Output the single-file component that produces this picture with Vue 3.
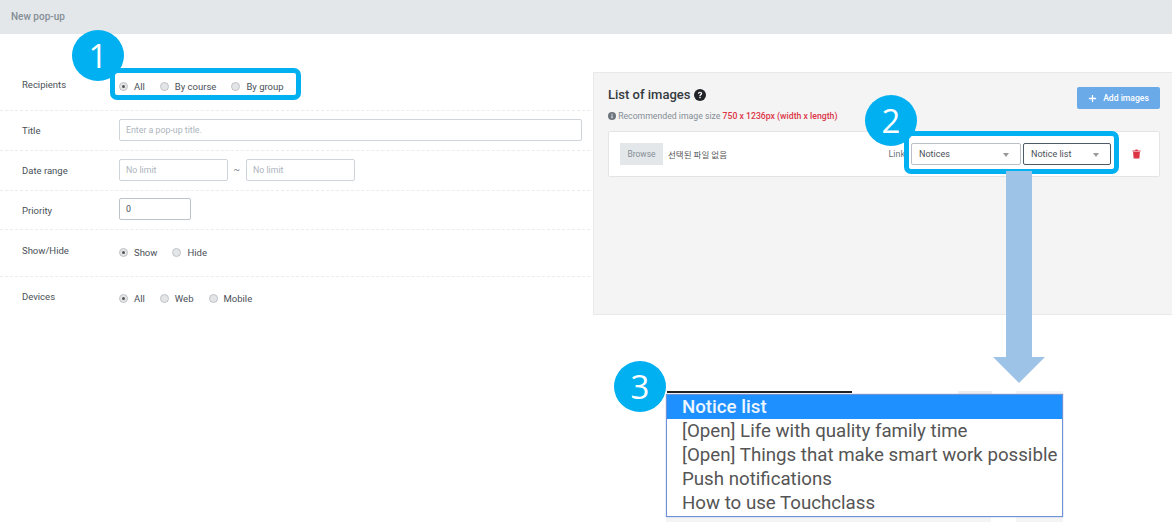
<script setup>
const recipients = [
  { label: 'All', checked: true },
  { label: 'By course' },
  { label: 'By group' },
]
const visibility = [{ label: 'Show', checked: true }, { label: 'Hide' }]
const devices = [{ label: 'All', checked: true }, { label: 'Web' }, { label: 'Mobile' }]
const options = [
  '[Open] Life with quality family time',
  '[Open] Things that make smart work possible',
  'Push notifications',
  'How to use Touchclass',
]
</script>

<template>
  <div class="page">
    <header class="header">New pop-up</header>
    <main class="body">
      <section class="form">
        <div class="row row-recipients">
          <span class="label label-up">Recipients</span>
          <div class="radios">
            <label v-for="r in recipients" :key="r.label" class="radio">
              <i :class="['dot', { on: r.checked }]"></i>{{ r.label }}
            </label>
          </div>
        </div>
        <div class="row row-field">
          <span class="label label-down">Title</span>
          <div class="input wide">Enter a pop-up title.</div>
        </div>
        <div class="row row-field">
          <span class="label label-down">Date range</span>
          <div class="dates">
            <div class="input date">No limit</div>
            <span class="tilde">~</span>
            <div class="input date">No limit</div>
          </div>
        </div>
        <div class="row row-field">
          <span class="label label-down">Priority</span>
          <div class="input small">0</div>
        </div>
        <div class="row row-show">
          <span class="label label-up">Show/Hide</span>
          <div class="radios">
            <label v-for="r in visibility" :key="r.label" class="radio">
              <i :class="['dot', { on: r.checked }]"></i>{{ r.label }}
            </label>
          </div>
        </div>
        <div class="row row-devices">
          <span class="label label-up">Devices</span>
          <div class="radios">
            <label v-for="r in devices" :key="r.label" class="radio">
              <i :class="['dot', { on: r.checked }]"></i>{{ r.label }}
            </label>
          </div>
        </div>
      </section>

      <section class="panel">
        <div class="panel-top">
          <div>
            <h2 class="panel-title">
              List of images
              <svg class="help" viewBox="0 0 16 16" width="12" height="12">
                <circle cx="8" cy="8" r="8" fill="#212529" />
                <path d="M5.2 6.2c0-1.7 1.3-2.7 2.9-2.7s2.8 1 2.8 2.4c0 2-2.1 2-2.1 3.3H7.1c0-2.1 2-2.2 2-3.2 0-.5-.4-.9-1-.9-.7 0-1.1.4-1.2 1.1z" fill="#fff" />
                <rect x="7.1" y="10.3" width="1.8" height="1.9" fill="#fff" />
              </svg>
            </h2>
            <p class="hint">
              <svg viewBox="0 0 16 16" width="8" height="8">
                <circle cx="8" cy="8" r="8" fill="#6c757d" />
                <rect x="7" y="7" width="2" height="5.5" fill="#fff" />
                <rect x="7" y="3.6" width="2" height="2" fill="#fff" />
              </svg>
              Recommended image size <b>750 x 1236px (width x length)</b>
            </p>
          </div>
          <button class="add">
            <svg viewBox="0 0 10 10" width="9" height="9"><path d="M5 1v8M1 5h8" stroke="#fff" stroke-width="1.4" /></svg>
            Add images
          </button>
        </div>
        <div class="image-row">
          <span class="browse">Browse</span>
          <span class="file">선택된 파일 없음</span>
          <span class="link">Link</span>
          <div class="select s1">Notices<i class="caret"></i></div>
          <div class="select s2">Notice list<i class="caret"></i></div>
          <svg class="trash" viewBox="0 0 10 11" width="9" height="10">
            <path d="M0.5 1.6h3L4 .6h2l.5 1h3v1.2h-9zM1.2 3.4h7.6L8.2 10.6H1.8z" fill="#dc3545" />
          </svg>
        </div>
      </section>
    </main>

    <div class="box box1"></div>
    <div class="box box2"></div>
    <div class="badge b1">1</div>
    <div class="badge b2">2</div>
    <div class="badge b3">3</div>

    <div class="shaft"></div>
    <div class="head"></div>

    <div class="strip-top"></div>
    <div class="strip-bottom"></div>
    <div class="blackline"></div>
    <ul class="dropdown">
      <li class="active">Notice list</li>
      <li v-for="o in options" :key="o">{{ o }}</li>
    </ul>
  </div>
</template>

<style scoped>
.page {
  position: relative;
  width: 1172px;
  height: 522px;
  overflow: hidden;
  background: #fff;
  font-family: Roboto, "Noto Sans CJK KR", sans-serif;
  color: #495057;
  font-size: 9.5px;
}
.header {
  height: 34px;
  line-height: 34px;
  padding-left: 11px;
  background: #e3e7ea;
  color: #868e96;
  font-size: 10px;
  font-weight: 500;
}
.body {
  display: flex;
  gap: 3px;
}
.form {
  width: 590px;
  flex: none;
}
.row {
  display: flex;
  align-items: center;
  padding-left: 22px;
  border-bottom: 1px dashed #ececec;
  box-sizing: border-box;
}
.row:last-child { border-bottom: 0; }
.label {
  width: 97px;
  flex: none;
}
.label-up { position: relative; top: -2px; }
.label-down { position: relative; top: 1px; }
.row-recipients { height: 77px; padding-top: 28px; }
.row-field { height: 40px; padding-bottom: 2px; }
.row:nth-child(4) { height: 39px; }
.row-show { height: 47px; padding-bottom: 2px; }
.row-devices { height: 44px; padding-bottom: 2px; }
.radios { display: flex; gap: 15px; }
.radio {
  display: flex;
  align-items: center;
  gap: 6px;
  height: 14px;
}
.dot {
  width: 9px;
  height: 9px;
  box-sizing: border-box;
  border-radius: 50%;
  border: 1px solid #bfc3c7;
  background: #e3e5e7;
  position: relative;
}
.dot.on::after {
  content: "";
  position: absolute;
  inset: 2px;
  border-radius: 50%;
  background: #555;
}
.input {
  box-sizing: border-box;
  height: 22px;
  line-height: 20px;
  padding-left: 6px;
  border: 1px solid #ced4da;
  border-radius: 2px;
  background: #fff;
  color: #adb5bd;
  font-size: 8.8px;
}
.wide { width: 463px; }
.date { width: 108.5px; }
.small { width: 72px; color: #495057; border-color: #bcc3c9; }
.dates { display: flex; align-items: center; }
.tilde { width: 18.5px; text-align: center; color: #6c757d; }
.panel {
  box-sizing: border-box;
  margin-top: 38px;
  width: 579px;
  height: 243px;
  background: #f4f4f4;
  border: 1px solid #e9e9e9;
  border-right: 0;
  padding: 14px 12px 0 14px;
}
.panel-top {
  display: flex;
  justify-content: space-between;
  align-items: flex-start;
}
.panel-title {
  margin: 0;
  font-size: 13px;
  line-height: 16px;
  font-weight: 500;
  color: #343a40;
  display: flex;
  align-items: center;
  gap: 4px;
}
.hint {
  margin: 8px 0 0;
  font-size: 8.7px;
  line-height: 11px;
  color: #868e96;
  white-space: nowrap;
}
.hint svg { vertical-align: -1px; }
.hint b { color: #dc3545; font-weight: 500; }
.add {
  box-sizing: border-box;
  width: 83px;
  height: 22px;
  margin-top: 0;
  border: 0;
  border-radius: 2px;
  background: #6aaae8;
  color: #fff;
  font: 500 8.6px Roboto, sans-serif;
  display: flex;
  align-items: center;
  justify-content: center;
  gap: 6px;
}
.image-row {
  box-sizing: border-box;
  margin-top: 9px;
  height: 46px;
  display: flex;
  align-items: center;
  padding-left: 11px;
  background: #fff;
  border: 1px solid #e4e4e4;
  border-radius: 2px;
}
.browse {
  width: 43px;
  height: 22px;
  line-height: 22px;
  text-align: center;
  background: #e3e7ea;
  color: #868e96;
  font-size: 8.5px;
}
.file { margin-left: 5px; font-size: 8.5px; color: #555; }
.link { margin-left: auto; font-size: 9px; color: #6c757d; }
.select {
  box-sizing: border-box;
  height: 22px;
  line-height: 20px;
  padding-left: 7px;
  border: 1px solid #ced4da;
  border-radius: 2px;
  background: #fff;
  color: #495057;
  font-size: 9px;
  position: relative;
}
.s1 { width: 110px; margin-left: 6px; border-color: #b9c0c7; }
.s2 { width: 88px; margin-left: 2px; border-color: #4d5a68; }
.caret {
  position: absolute;
  right: 11px;
  top: 8.5px;
  border: 3px solid transparent;
  border-top: 4px solid #999;
  border-bottom: 0;
}
.trash { margin-left: 21px; margin-right: 18px; }
.box {
  position: absolute;
  box-sizing: border-box;
  border: 5px solid #00b0f0;
  border-radius: 7px;
}
.box1 { left: 110px; top: 68px; width: 191px; height: 32px; }
.box2 { left: 904px; top: 131px; width: 215px; height: 43px; }
.badge {
  position: absolute;
  width: 52px;
  height: 51px;
  border-radius: 50%;
  background: #00b0f0;
  color: #fff;
  text-align: center;
  font: 33px/51px "Open Sans", sans-serif;
}
.b1 { left: 72px; top: 30px; }
.b2 { left: 865px; top: 95px; }
.b3 { left: 614px; top: 361px; }
.shaft {
  position: absolute;
  left: 1006px;
  top: 171px;
  width: 26px;
  height: 186px;
  background: #9dc3e6;
}
.head {
  position: absolute;
  left: 993px;
  top: 357px;
  width: 0;
  height: 0;
  border-left: 26px solid transparent;
  border-right: 26px solid transparent;
  border-top: 26px solid #9dc3e6;
}
.strip-top {
  position: absolute;
  left: 852px;
  top: 391px;
  width: 211px;
  height: 3px;
  background: linear-gradient(to right, #fff 106px, #eeeeee 106px, #eeeeee 140px, #fff 140px, #fff 164px, #f4f4f4 164px);
}
.strip-bottom {
  position: absolute;
  left: 666px;
  top: 517px;
  width: 397px;
  height: 5px;
  background: linear-gradient(to right, #f4f4f4 325px, #fff 325px, #fff 350px, #f4f4f4 350px);
}
.blackline {
  position: absolute;
  left: 667px;
  top: 391px;
  width: 185px;
  height: 2px;
  background: #222;
}
.dropdown {
  position: absolute;
  left: 666px;
  top: 394px;
  box-sizing: border-box;
  width: 397px;
  height: 123px;
  margin: 0;
  padding: 0;
  list-style: none;
  background: #fff;
  border: 1px solid #6f93d6;
  box-shadow: 0 0 1px #6f93d6;
  font-size: 18.7px;
  color: #555;
  white-space: nowrap;
}
.dropdown li {
  height: 24px;
  line-height: 24px;
  padding-left: 15px;
}
.dropdown .active {
  background: #1e90ff;
  color: #eef6ff;
  font-weight: 500;
}
</style>
